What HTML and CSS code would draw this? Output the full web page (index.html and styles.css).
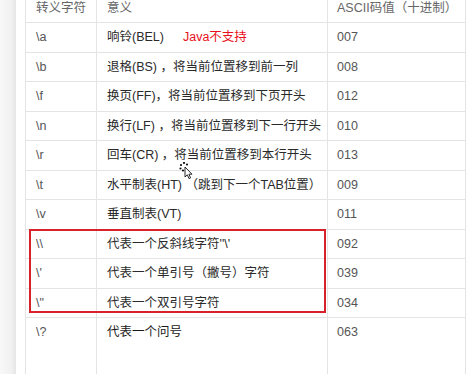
FILE: index.html
```html
<!DOCTYPE html>
<html lang="zh">
<head>
<meta charset="utf-8">
<link rel="stylesheet" href="styles.css">
</head>
<body>
<div class="shade"></div>
<div class="content">
  <table class="esc">
    <colgroup><col class="c1"><col class="c2"><col class="c3"></colgroup>
    <tr class="head"><td>转义字符</td><td>意义</td><td>ASCII码值（十进制）</td></tr>
    <tr><td>\a</td><td>响铃(BEL)<span class="warn">Java不支持</span></td><td>007</td></tr>
    <tr><td>\b</td><td>退格(BS) ，将当前位置移到前一列</td><td>008</td></tr>
    <tr><td>\f</td><td>换页(FF)，将当前位置移到下页开头</td><td>012</td></tr>
    <tr><td>\n</td><td>换行(LF) ，将当前位置移到下一行开头</td><td>010</td></tr>
    <tr><td>\r</td><td>回车(CR) ，将当前位置移到本行开头</td><td>013</td></tr>
    <tr><td>\t</td><td>水平制表(HT) （跳到下一个TAB位置）</td><td>009</td></tr>
    <tr><td>\v</td><td>垂直制表(VT)</td><td>011</td></tr>
    <tr><td>\\</td><td>代表一个反斜线字符''\'</td><td>092</td></tr>
    <tr><td>\'</td><td>代表一个单引号（撇号）字符</td><td>039</td></tr>
    <tr><td>\"</td><td>代表一个双引号字符</td><td>034</td></tr>
    <tr class="tall"><td>\?</td><td class="strong">代表一个问号</td><td>063</td></tr>
    <tr><td></td><td></td><td></td></tr>
  </table>
  <div class="mark"></div>
  <svg class="cursor" width="16" height="20" viewBox="0 0 16 20">
    <circle cx="2" cy="3" r="1.1" fill="#111"/>
    <circle cx="5" cy="1" r="1.1" fill="#111"/>
    <circle cx="8" cy="2.5" r="1.1" fill="#111"/>
    <circle cx="1.5" cy="6.5" r="1.1" fill="#111"/>
    <circle cx="4" cy="8.5" r="1.1" fill="#111"/>
    <path d="M6 5 L6 15 L8.3 12.8 L10 16.6 L11.6 15.9 L9.9 12.2 L13 12.2 Z" fill="#fff" stroke="#111" stroke-width="0.9" stroke-linejoin="round"/>
  </svg>
</div>
</body>
</html>
```
FILE: styles.css
```css
html, body {
  margin: 0;
  padding: 0;
  background: #fff;
}
body {
  display: flex;
  height: 374px;
  overflow: hidden;
  font-family: "Liberation Sans", "Noto Sans CJK SC", sans-serif;
  font-size: 12.5px;
}
.shade {
  width: 16px;
  flex: none;
  background: linear-gradient(to right, #f8f8f8 0%, #f1f1f1 70%, #e6e6e6 100%);
}
.content {
  position: relative;
  padding-left: 9px;
  margin-top: -7.5px;
}
.esc {
  border-collapse: collapse;
  table-layout: fixed;
  width: 440px;
}
.c1 { width: 71px; }
.c2 { width: 231px; }
.c3 { width: 138px; }
.esc td {
  border: 1px solid #e4e4e4;
  height: 28.5px;
  padding: 0 0 0 10px;
  color: #555;
  white-space: nowrap;
  overflow: hidden;
  vertical-align: middle;
  line-height: 16px;
}
.esc td:nth-child(2) {
  color: #2a2a2a;
}
.esc td:nth-child(3) {
  padding-left: 9px;
}
.esc .head td {
  color: #666;
}
.warn {
  color: #e8101a;
  margin-left: 19px;
}
.tall td {
  height: 50px;
  vertical-align: top;
  padding-top: 6px;
}
.esc td.strong {
  color: #1a1a1a;
}
.mark {
  position: absolute;
  left: 13px;
  top: 236.5px;
  width: 293px;
  height: 80px;
  border: 2px solid #d8222b;
}
.cursor {
  position: absolute;
  left: 163px;
  top: 169px;
}
```
